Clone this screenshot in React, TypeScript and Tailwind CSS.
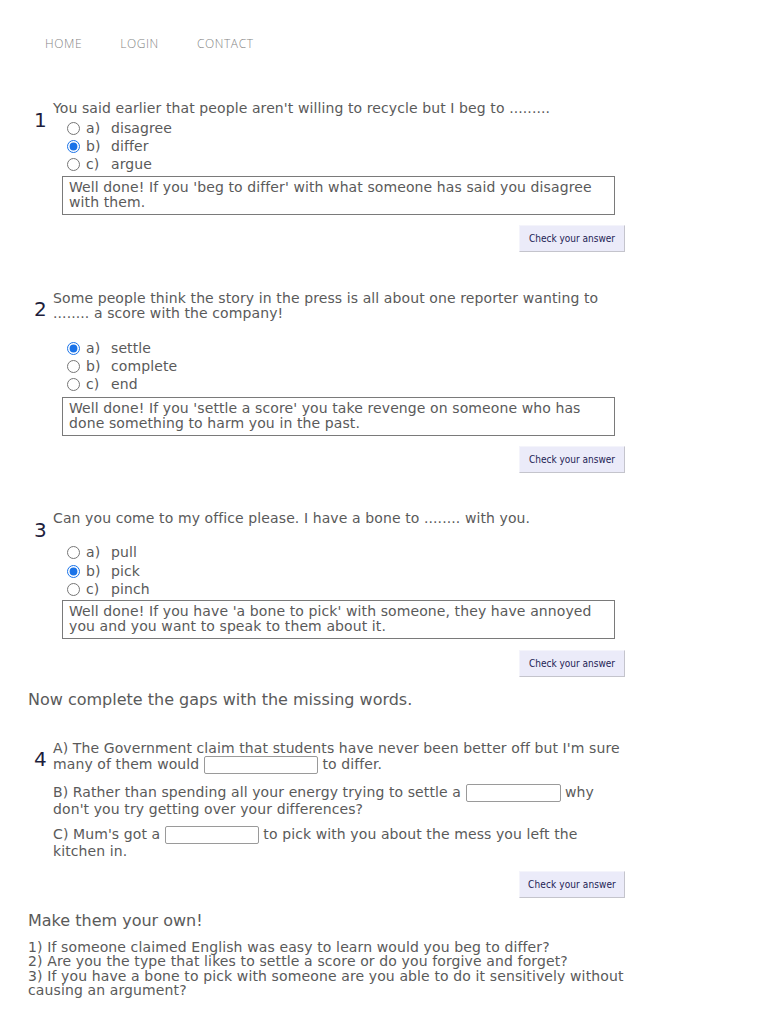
import React from "react";

const body = { fontFamily: '"DejaVu Sans", Verdana, sans-serif' };
const cond = { fontFamily: '"DejaVu Sans Condensed", "DejaVu Sans", Tahoma, sans-serif', fontStretch: "condensed" as const };

function Radio({ checked, letter, word }: { checked?: boolean; letter: string; word: string }) {
  return (
    <div className="flex h-[18.3px] items-center text-[14px] tracking-[0.1px]">
      <input
        type="radio"
        readOnly
        checked={!!checked}
        className="m-0 ml-[14px] h-[13px] w-[13px] accent-[#1a73e8]"
      />
      <span className="ml-[6px] w-[25px]">{letter})</span>
      <span>{word}</span>
    </div>
  );
}

function CheckButton() {
  return (
    <div className="flex justify-end">
      <div
        className="flex h-[27px] w-[106px] items-center justify-center border border-t-[#f4f4fb] border-l-[#f4f4fb] border-r-[#c4c4cc] border-b-[#c4c4cc] bg-[#ebebf9] text-[10px] text-[#1d1d55]"
        style={cond}
      >
        Check your answer
      </div>
    </div>
  );
}

function Feedback({ children }: { children: React.ReactNode }) {
  return (
    <div className="ml-[9px] w-[553px] whitespace-nowrap border border-[#7a7a7a] px-[6px] py-[3px] text-[14px] leading-[15.5px] tracking-[0.1px]">
      {children}
    </div>
  );
}

function Question({
  n,
  numTop,
  question,
  gap,
  fbTop,
  btnTop,
  opts,
  feedback,
}: {
  n: string;
  numTop: string;
  question: React.ReactNode;
  gap: string;
  fbTop: string;
  btnTop: string;
  opts: { l: string; w: string; c?: boolean }[];
  feedback: React.ReactNode;
}) {
  return (
    <div className="flex">
      <div className={`w-[25px] pl-[6px] text-[20px] leading-[20px] text-[#1e1e3c] ${numTop}`}>{n}</div>
      <div className="w-[572px]">
        <div className="whitespace-nowrap text-[14px] leading-[15px] tracking-[0.1px]">{question}</div>
        <div className={gap}>
          {opts.map((o) => (
            <Radio key={o.l} letter={o.l} word={o.w} checked={o.c} />
          ))}
        </div>
        <div className={fbTop}>
          <Feedback>{feedback}</Feedback>
        </div>
        <div className={btnTop}>
          <CheckButton />
        </div>
      </div>
    </div>
  );
}

function Gap({ w }: { w: string }) {
  return (
    <span className={`-my-[3px] inline-block h-[18px] ${w} rounded-[2px] border border-[#9a9a9a] bg-white align-middle`} />
  );
}

export default function App() {
  return (
    <div className="min-h-[1024px] w-[768px] bg-white text-[#5a5a5a]" style={body}>
      <nav
        className="flex gap-[38px] pl-[45px] pt-[35px] text-[12px] font-light uppercase tracking-[0.6px] text-[#858585]"
        style={{ fontFamily: '"Open Sans", Lato, sans-serif' }}
      >
        <span>Home</span>
        <span>Login</span>
        <span>Contact</span>
      </nav>

      <div className="pl-[28px]">
        <div className="mt-[48px]">
          <Question
            n="1"
            numTop="mt-[9px]"
            question="You said earlier that people aren't willing to recycle but I beg to ........."
            gap="mt-[3px]"
            fbTop="mt-[2px]"
            btnTop="mt-[10px]"
            opts={[
              { l: "a", w: "disagree" },
              { l: "b", w: "differ", c: true },
              { l: "c", w: "argue" },
            ]}
            feedback={
              <>
                Well done! If you 'beg to differ' with what someone has said you disagree
                <br />
                with them.
              </>
            }
          />
        </div>

        <div className="mt-[39px]">
          <Question
            n="2"
            numTop="mt-[8px]"
            question={
              <>
                Some people think the story in the press is all about one reporter wanting to
                <br />
                ........ a score with the company!
              </>
            }
            gap="mt-[18px]"
            fbTop="mt-[3px]"
            btnTop="mt-[10px]"
            opts={[
              { l: "a", w: "settle", c: true },
              { l: "b", w: "complete" },
              { l: "c", w: "end" },
            ]}
            feedback={
              <>
                Well done! If you 'settle a score' you take revenge on someone who has
                <br />
                done something to harm you in the past.
              </>
            }
          />
        </div>

        <div className="mt-[38px]">
          <Question
            n="3"
            numTop="mt-[9px]"
            question="Can you come to my office please. I have a bone to ........ with you."
            gap="mt-[18px]"
            fbTop="mt-[1px]"
            btnTop="mt-[11px]"
            opts={[
              { l: "a", w: "pull" },
              { l: "b", w: "pick", c: true },
              { l: "c", w: "pinch" },
            ]}
            feedback={
              <>
                Well done! If you have 'a bone to pick' with someone, they have annoyed
                <br />
                you and you want to speak to them about it.
              </>
            }
          />
        </div>

        <div className="mt-[14px] text-[16px] leading-[18px]">Now complete the gaps with the missing words.</div>

        <div className="mt-[31px] flex">
          <div className="mt-[9px] w-[25px] pl-[6px] text-[20px] leading-[20px] text-[#1e1e3c]">4</div>
          <div className="w-[572px] whitespace-nowrap text-[14px] tracking-[0.1px]">
            <p className="leading-[16px]">
              A) The Government claim that students have never been better off but I'm sure
              <br />
              many of them would <Gap w="w-[114px]" /> to differ.
            </p>
            <p className="mt-[12px] leading-[17px]">
              B) Rather than spending all your energy trying to settle a <Gap w="w-[95px]" /> why
              <br />
              don't you try getting over your differences?
            </p>
            <p className="mt-[8px] leading-[17px]">
              C) Mum's got a <Gap w="w-[94px]" /> to pick with you about the mess you left the
              <br />
              kitchen in.
            </p>
            <div className="mt-[11px]">
              <CheckButton />
            </div>
          </div>
        </div>

        <div className="mt-[14px] text-[16px] leading-[18px]">Make them your own!</div>
        <div className="mt-[10px] whitespace-nowrap text-[14px] leading-[14.6px] tracking-[0.12px]">
          <div>1) If someone claimed English was easy to learn would you beg to differ?</div>
          <div>2) Are you the type that likes to settle a score or do you forgive and forget?</div>
          <div>
            3) If you have a bone to pick with someone are you able to do it sensitively without
            <br />
            causing an argument?
          </div>
        </div>
      </div>
    </div>
  );
}
